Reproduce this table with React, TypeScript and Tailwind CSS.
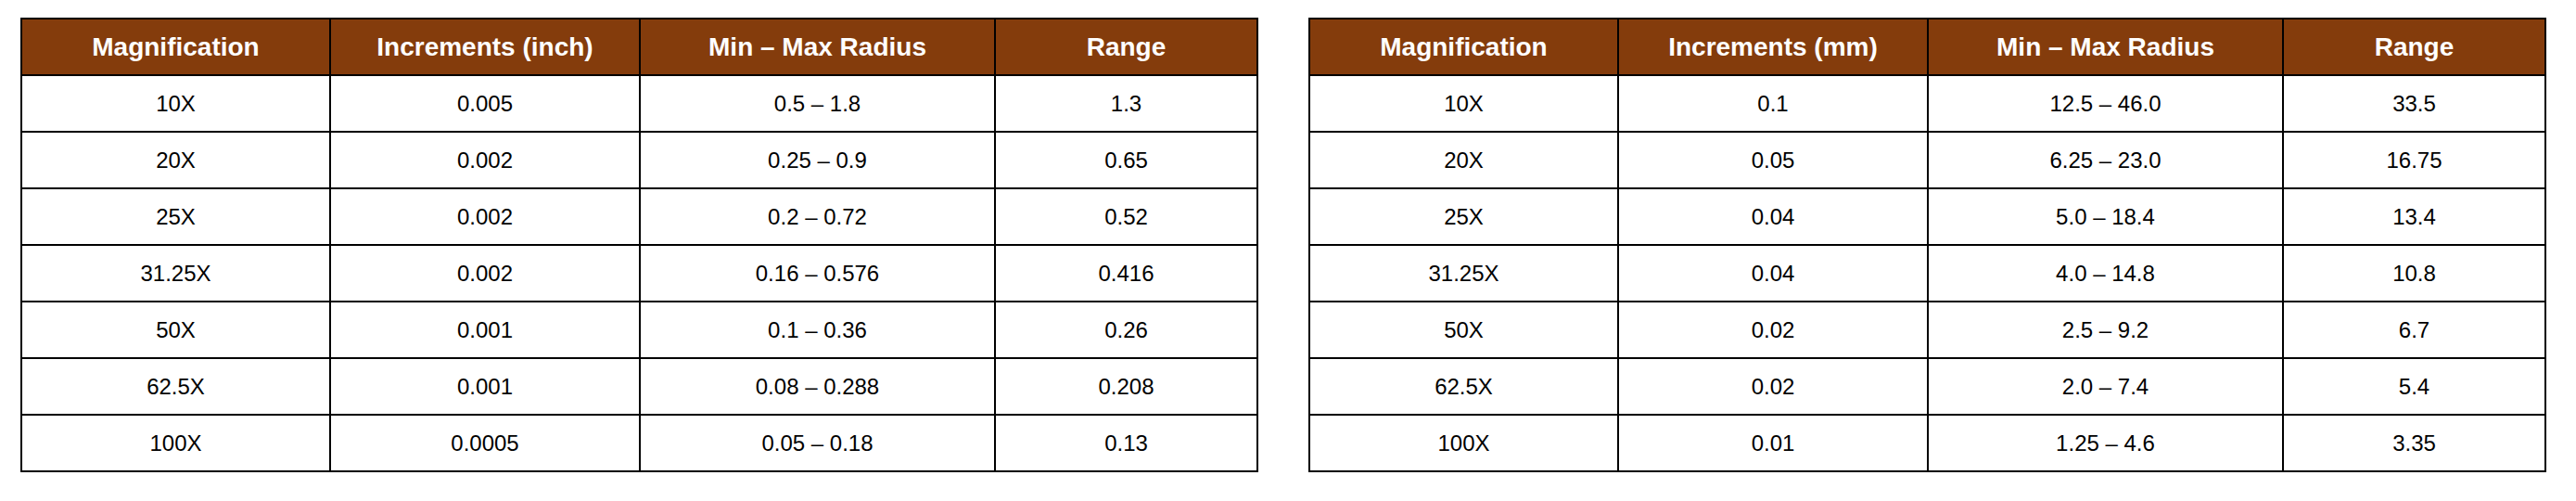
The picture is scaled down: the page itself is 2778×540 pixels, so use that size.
const headersInch = ["Magnification", "Increments (inch)", "Min – Max Radius", "Range"];
const headersMm = ["Magnification", "Increments (mm)", "Min – Max Radius", "Range"];

const inchRows = [
  ["10X", "0.005", "0.5 – 1.8", "1.3"],
  ["20X", "0.002", "0.25 – 0.9", "0.65"],
  ["25X", "0.002", "0.2 – 0.72", "0.52"],
  ["31.25X", "0.002", "0.16 – 0.576", "0.416"],
  ["50X", "0.001", "0.1 – 0.36", "0.26"],
  ["62.5X", "0.001", "0.08 – 0.288", "0.208"],
  ["100X", "0.0005", "0.05 – 0.18", "0.13"],
];

const mmRows = [
  ["10X", "0.1", "12.5 – 46.0", "33.5"],
  ["20X", "0.05", "6.25 – 23.0", "16.75"],
  ["25X", "0.04", "5.0 – 18.4", "13.4"],
  ["31.25X", "0.04", "4.0 – 14.8", "10.8"],
  ["50X", "0.02", "2.5 – 9.2", "6.7"],
  ["62.5X", "0.02", "2.0 – 7.4", "5.4"],
  ["100X", "0.01", "1.25 – 4.6", "3.35"],
];

function RadiusTable({ headers, rows }: { headers: string[]; rows: string[][] }) {
  return (
    <table className="w-[1333px] shrink-0 table-fixed border-collapse border-2 border-black">
      <colgroup>
        <col className="w-[333px]" />
        <col className="w-[334px]" />
        <col className="w-[383px]" />
        <col className="w-[283px]" />
      </colgroup>
      <thead>
        <tr className="h-[61px] bg-[#843c0c]">
          {headers.map((h) => (
            <th
              key={h}
              className="border-2 border-black p-0 text-center text-[28px] font-bold leading-none text-white"
            >
              {h}
            </th>
          ))}
        </tr>
      </thead>
      <tbody>
        {rows.map((row) => (
          <tr key={row[0]} className="h-[61px] bg-white">
            {row.map((cell, i) => (
              <td
                key={i}
                className="border-2 border-black p-0 text-center text-[24px] leading-none text-black"
              >
                {cell}
              </td>
            ))}
          </tr>
        ))}
      </tbody>
    </table>
  );
}

export default function App() {
  return (
    <div className="flex h-[540px] w-[2778px] items-start gap-[54px] bg-white pl-[22px] pt-[19px] font-['Liberation_Sans',Arial,sans-serif]">
      <RadiusTable headers={headersInch} rows={inchRows} />
      <RadiusTable headers={headersMm} rows={mmRows} />
    </div>
  );
}
